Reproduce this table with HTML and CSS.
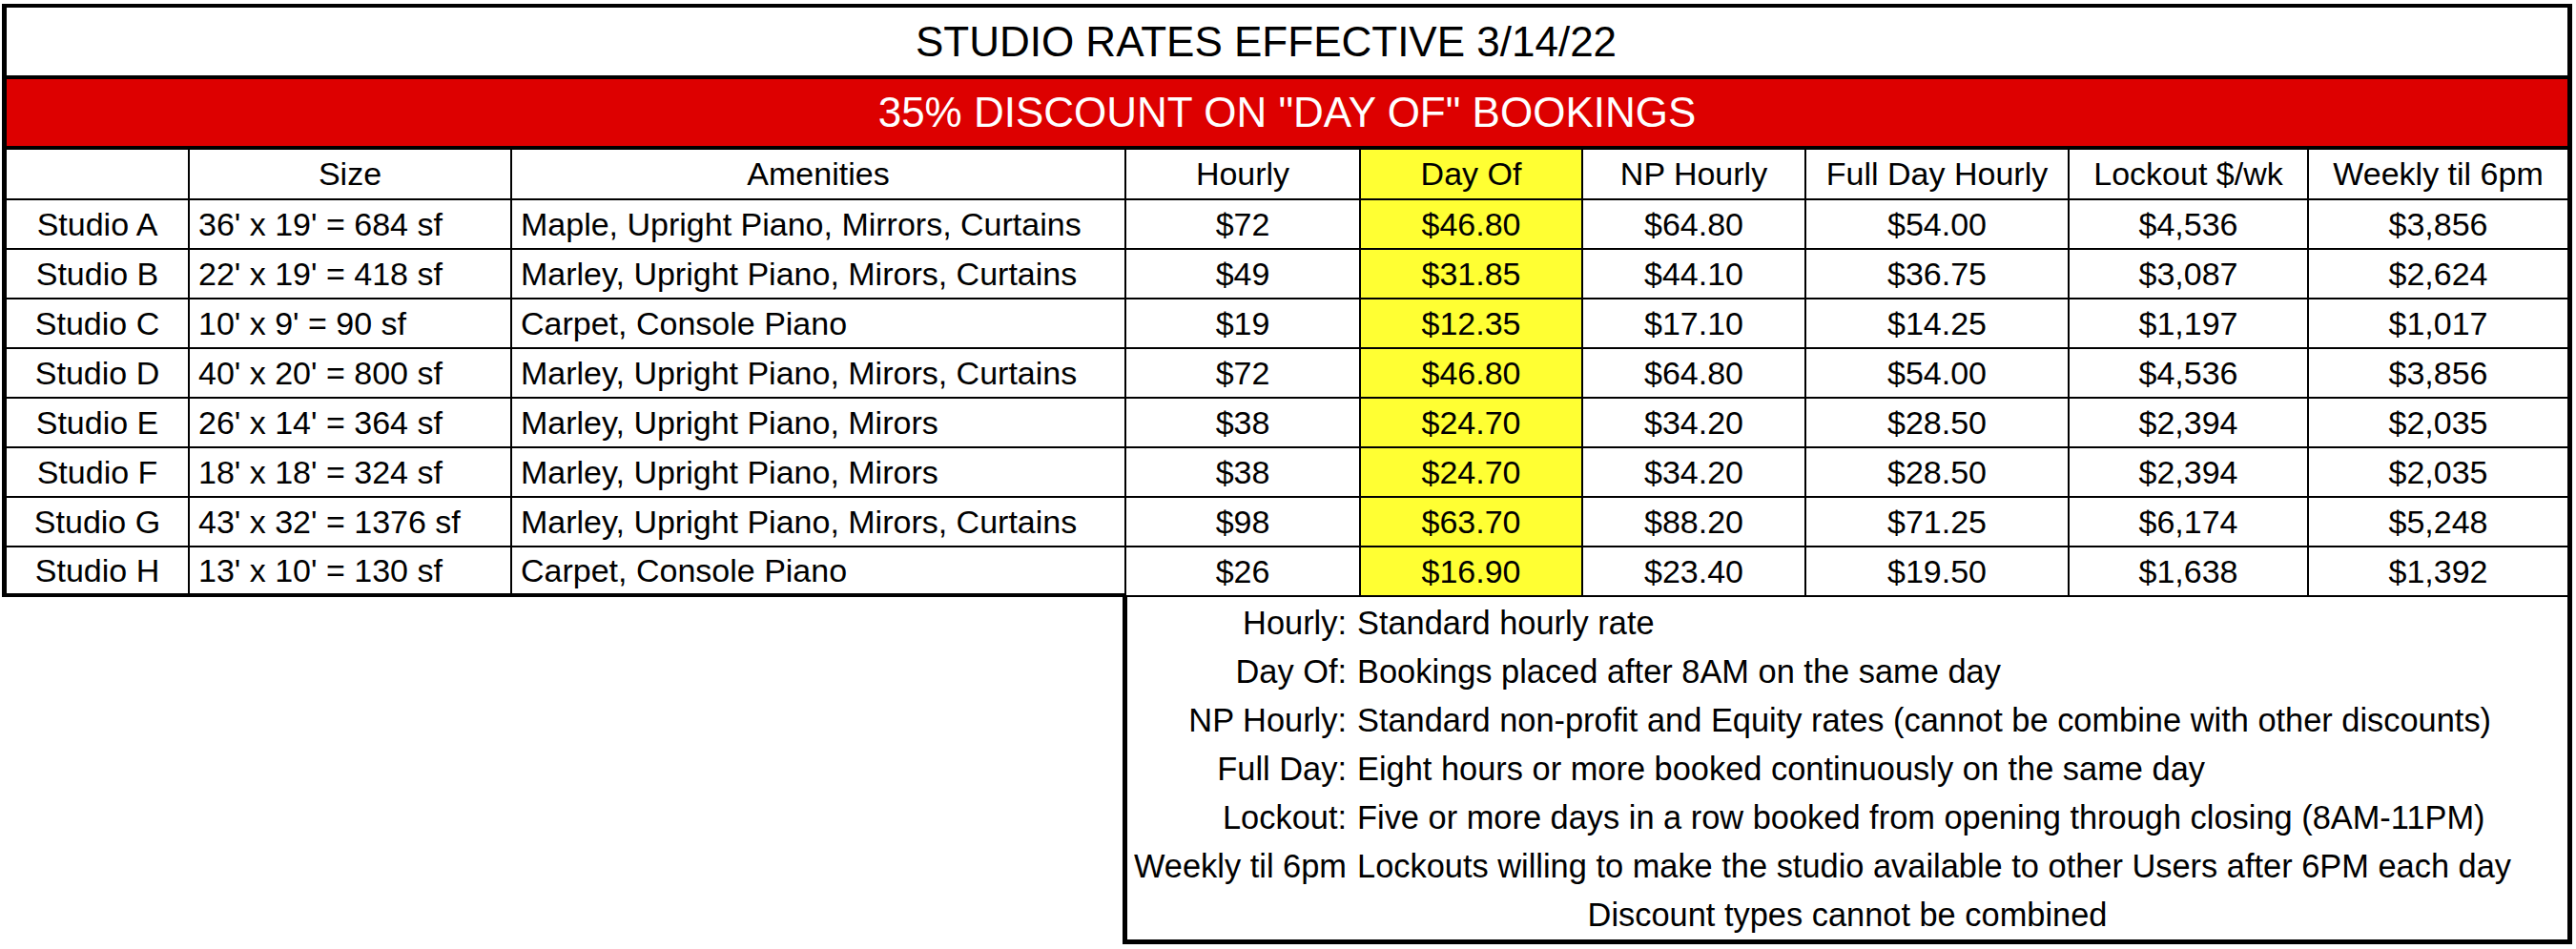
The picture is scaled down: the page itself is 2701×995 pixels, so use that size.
FILE: index.html
```html
<!DOCTYPE html>
<html lang="en">
<head>
<meta charset="utf-8">
<title>Studio Rates</title>
<link rel="stylesheet" href="styles.css">
</head>
<body>
<div class="page">
  <div class="top">
    <div class="title">STUDIO RATES EFFECTIVE 3/14/22</div>
    <div class="banner">35% DISCOUNT ON "DAY OF" BOOKINGS</div>
    <div class="grid">
      <div class="c"></div><div class="c">Size</div><div class="c">Amenities</div><div class="c">Hourly</div><div class="c y">Day Of</div><div class="c">NP Hourly</div><div class="c">Full Day Hourly</div><div class="c">Lockout $/wk</div><div class="c">Weekly til 6pm</div>

      <div class="c">Studio A</div><div class="c l">36' x 19' = 684 sf</div><div class="c l">Maple, Upright Piano, Mirrors, Curtains</div><div class="c">$72</div><div class="c y">$46.80</div><div class="c">$64.80</div><div class="c">$54.00</div><div class="c">$4,536</div><div class="c">$3,856</div>

      <div class="c">Studio B</div><div class="c l">22' x 19' = 418 sf</div><div class="c l">Marley, Upright Piano, Mirors, Curtains</div><div class="c">$49</div><div class="c y">$31.85</div><div class="c">$44.10</div><div class="c">$36.75</div><div class="c">$3,087</div><div class="c">$2,624</div>

      <div class="c">Studio C</div><div class="c l">10' x 9' = 90 sf</div><div class="c l">Carpet, Console Piano</div><div class="c">$19</div><div class="c y">$12.35</div><div class="c">$17.10</div><div class="c">$14.25</div><div class="c">$1,197</div><div class="c">$1,017</div>

      <div class="c">Studio D</div><div class="c l">40' x 20' = 800 sf</div><div class="c l">Marley, Upright Piano, Mirors, Curtains</div><div class="c">$72</div><div class="c y">$46.80</div><div class="c">$64.80</div><div class="c">$54.00</div><div class="c">$4,536</div><div class="c">$3,856</div>

      <div class="c">Studio E</div><div class="c l">26' x 14' = 364 sf</div><div class="c l">Marley, Upright Piano, Mirors</div><div class="c">$38</div><div class="c y">$24.70</div><div class="c">$34.20</div><div class="c">$28.50</div><div class="c">$2,394</div><div class="c">$2,035</div>

      <div class="c">Studio F</div><div class="c l">18' x 18' = 324 sf</div><div class="c l">Marley, Upright Piano, Mirors</div><div class="c">$38</div><div class="c y">$24.70</div><div class="c">$34.20</div><div class="c">$28.50</div><div class="c">$2,394</div><div class="c">$2,035</div>

      <div class="c">Studio G</div><div class="c l">43' x 32' = 1376 sf</div><div class="c l">Marley, Upright Piano, Mirors, Curtains</div><div class="c">$98</div><div class="c y">$63.70</div><div class="c">$88.20</div><div class="c">$71.25</div><div class="c">$6,174</div><div class="c">$5,248</div>

      <div class="c last">Studio H</div><div class="c l last">13' x 10' = 130 sf</div><div class="c l last">Carpet, Console Piano</div><div class="c">$26</div><div class="c y">$16.90</div><div class="c">$23.40</div><div class="c">$19.50</div><div class="c">$1,638</div><div class="c">$1,392</div>
    </div>
  </div>
  <div class="legend">
    <div class="lab">Hourly:</div><div class="desc">Standard hourly rate</div>
    <div class="lab">Day Of:</div><div class="desc">Bookings placed after 8AM on the same day</div>
    <div class="lab">NP Hourly:</div><div class="desc">Standard non-profit and Equity rates (cannot be combine with other discounts)</div>
    <div class="lab">Full Day:</div><div class="desc">Eight hours or more booked continuously on the same day</div>
    <div class="lab">Lockout:</div><div class="desc">Five or more days in a row booked from opening through closing (8AM-11PM)</div>
    <div class="lab">Weekly til 6pm</div><div class="desc">Lockouts willing to make the studio available to other Users after 6PM each day</div>
    <div class="note">Discount types cannot be combined</div>
  </div>
</div>
</body>
</html>
```

FILE: styles.css
```css
html, body {
  margin: 0;
  padding: 0;
  background: #ffffff;
}

body {
  font-family: "Liberation Sans", Arial, sans-serif;
  color: #000;
  font-size: 34px;
}

.page {
  padding: 4px 0 0 2px;
  width: 2695px;
}

.top {
  border-top: 4px solid #000;
  border-left: 5px solid #000;
  border-right: 5px solid #000;
}

.title {
  height: 71px;
  display: flex;
  align-items: center;
  justify-content: center;
  font-size: 44px;
  padding-right: 44px;
}

.banner {
  height: 70px;
  border-top: 4px solid #000;
  border-bottom: 4px solid #000;
  background: #dd0000;
  color: #fff;
  display: flex;
  align-items: center;
  justify-content: center;
  font-size: 44px;
}

.grid {
  display: grid;
  grid-template-columns: 190px 336px 642px 244px 231px 232px 274px 249px 271px;
  grid-template-rows: 51px repeat(8, 50px);
  gap: 2px;
  background: #000;
  padding-bottom: 2px;
}

.c {
  background: #fff;
  display: flex;
  align-items: center;
  justify-content: center;
  white-space: nowrap;
  box-sizing: border-box;
}

.c.l {
  justify-content: flex-start;
  padding-left: 9px;
}

.c.y {
  background: #ffff33;
}

.c.last {
  border-bottom: 2px solid #000;
}

.legend {
  margin-left: 1175px;
  width: 1520px;
  box-sizing: border-box;
  border-left: 5px solid #000;
  border-right: 5px solid #000;
  border-bottom: 5px solid #000;
  display: grid;
  grid-template-columns: 230px 1fr;
  column-gap: 11px;
  grid-auto-rows: 51px;
  padding-top: 2px;
  font-size: 34.4px;
}

.lab {
  display: flex;
  align-items: center;
  justify-content: flex-end;
  white-space: nowrap;
}

.desc {
  display: flex;
  align-items: center;
  white-space: nowrap;
}

.note {
  grid-column: 1 / 3;
  display: flex;
  align-items: center;
  justify-content: center;
}
```
